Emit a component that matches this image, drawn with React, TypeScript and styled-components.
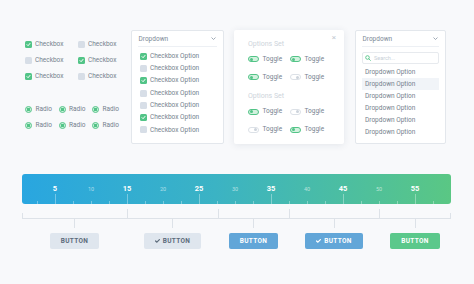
import React from 'react';
import styled, { createGlobalStyle } from 'styled-components';

const green = '#52c487';
const ink = '#75818e';
const rule = '#dde2e8';

const Global = createGlobalStyle`
  body {
    margin: 0;
    background: #f8f9fb;
    font-family: Roboto, 'Liberation Sans', sans-serif;
  }
`;

const S = {
    Page: styled.div`
    width: 474px;
    height: 284px;
    padding-top: 30px;
    box-sizing: border-box;
    overflow: hidden;
    `,
    Top: styled.div`
    display: flex;
    align-items: flex-start;
    padding-left: 25px;
    `,
    Side: styled.div`
    width: 106px;
    flex-shrink: 0;
    padding-top: 6px;
    box-sizing: border-box;
    `,
    CheckGrid: styled.div`
    display: grid;
    grid-template-columns: 53px 53px;
    grid-auto-rows: 16px;
    align-items: center;
    `,
    RadioGrid: styled.div`
    display: grid;
    grid-template-columns: repeat(3, 33.5px);
    grid-auto-rows: 16px;
    align-items: center;
    margin-top: 17px;
    `,
    Item: styled.div<{ $gap?: number }>`
    display: flex;
    align-items: center;
    gap: ${p => p.$gap ?? 3}px;
    font-size: 6.5px;
    line-height: 1;
    color: ${ink};
    white-space: nowrap;
    `,
    Box: styled.span<{ $on: boolean }>`
    width: 7px;
    height: 7px;
    flex-shrink: 0;
    border-radius: 1.5px;
    background: ${p => p.$on ? green : '#d7dee7'};
    display: flex;
    align-items: center;
    justify-content: center;
    `,
    Radio: styled.span`
    width: 7px;
    height: 7px;
    flex-shrink: 0;
    border-radius: 50%;
    box-sizing: border-box;
    border: 1px solid ${green};
    background: radial-gradient(circle, ${green} 0 1.4px, #c9eed9 1.8px);
    `,
    Panel: styled.div<{ $w: number; $ml: number; $float?: boolean }>`
    width: ${p => p.$w}px;
    height: 114px;
    margin-left: ${p => p.$ml}px;
    flex-shrink: 0;
    box-sizing: border-box;
    background: #fff;
    border-radius: 2px;
    border: ${p => p.$float ? 'none' : '1px solid #e3e7ec'};
    box-shadow: ${p => p.$float ? '0 1px 7px rgba(40, 60, 90, 0.1)' : 'none'};
    padding: ${p => p.$float ? '9px 8px 0 14px' : '0 6px'};
    `,
    Header: styled.div`
    height: 15px;
    display: flex;
    align-items: center;
    justify-content: space-between;
    border-bottom: 1px solid #edf0f4;
    font-size: 6.5px;
    color: #7d8996;
    padding: 0 1px 0 0.5px;
    `,
    OptList: styled.div`
    padding-top: 3px;
    `,
    OptRow: styled.div`
    height: 12.3px;
    padding-left: 2px;
    display: flex;
    align-items: center;
    `,
    TitleRow: styled.div`
    display: flex;
    justify-content: space-between;
    align-items: flex-start;
    `,
    Title: styled.div<{ $mt?: number }>`
    font-size: 7px;
    line-height: 10px;
    color: #cdd4db;
    margin-top: ${p => p.$mt ?? 0}px;
    `,
    Close: styled.span`
    font-size: 8px;
    line-height: 8px;
    color: #c3cad2;
    margin-top: -5px;
    `,
    ToggleGrid: styled.div<{ $mt: number }>`
    display: grid;
    grid-template-columns: 42px 42px;
    grid-auto-rows: 18px;
    align-items: center;
    margin-top: ${p => p.$mt}px;
    `,
    Switch: styled.span<{ $on: boolean }>`
    width: 11px;
    height: 6px;
    flex-shrink: 0;
    box-sizing: border-box;
    border-radius: 3px;
    border: 1px solid ${p => p.$on ? green : '#dce1e7'};
    background: ${p => p.$on ? '#d3f1df' : '#fff'};
    display: flex;
    align-items: center;
    justify-content: ${p => p.$on ? 'flex-start' : 'flex-end'};
    padding: 0 1px;
    `,
    Knob: styled.span<{ $on: boolean }>`
    width: 3px;
    height: 3px;
    border-radius: 50%;
    background: ${p => p.$on ? green : '#cdd4dc'};
    `,
    Search: styled.div`
    margin-top: 5px;
    height: 12px;
    box-sizing: border-box;
    border: 1px solid #e7eaee;
    border-radius: 2px;
    display: flex;
    align-items: center;
    gap: 3px;
    padding-left: 2px;
    font-size: 5.5px;
    color: #c8cfd7;
    `,
    DropList: styled.div`
    margin-top: 2px;
    `,
    DropOpt: styled.div<{ $active?: boolean }>`
    height: 12px;
    padding-left: 3px;
    display: flex;
    align-items: center;
    font-size: 6.5px;
    color: ${ink};
    background: ${p => p.$active ? '#f1f4f8' : 'transparent'};
    `,
    Bar: styled.div`
    margin: 30px 0 0 22px;
    width: 429px;
    height: 30px;
    box-sizing: border-box;
    padding-left: 6px;
    border-radius: 3px;
    background: linear-gradient(90deg, #29a6e0 0%, #3bb3c4 45%, #5ac784 100%);
    display: flex;
    `,
    Cell: styled.div`
    width: 18px;
    flex-shrink: 0;
    display: flex;
    flex-direction: column;
    align-items: center;
    `,
    Num: styled.span<{ $major: boolean }>`
    margin-top: 10px;
    height: 10px;
    line-height: 10px;
    font-size: ${p => p.$major ? 7.5 : 5.5}px;
    font-weight: ${p => p.$major ? 700 : 400};
    color: ${p => p.$major ? '#fff' : 'rgba(255, 255, 255, 0.6)'};
    `,
    Tick: styled.span<{ $tall: boolean }>`
    margin-top: auto;
    width: 1px;
    height: ${p => p.$tall ? 10 : 3}px;
    background: rgba(255, 255, 255, 0.35);
    `,
    Ruler: styled.div`
    margin: 5px 0 0 22px;
    width: 429px;
    display: flex;
    `,
    Seg: styled.div<{ $w: number }>`
    width: ${p => p.$w}px;
    display: flex;
    flex-direction: column;
    align-items: center;
    `,
    Brace: styled.div<{ $first: boolean; $last: boolean }>`
    align-self: stretch;
    height: 9px;
    border-bottom: 1px solid ${rule};
    border-left: ${p => p.$first ? 'none' : `1px solid ${rule}`};
    background:
      ${p => p.$first ? `linear-gradient(${rule}, ${rule}) left bottom / 1px 5px no-repeat,` : ''}
      ${p => p.$last ? `linear-gradient(${rule}, ${rule}) right bottom / 1px 5px no-repeat,` : ''}
      transparent;
    `,
    Stem: styled.span`
    width: 1px;
    height: 9px;
    background: ${rule};
    `,
    Btn: styled.button<{ $kind: 'grey' | 'blue' | 'green' }>`
    margin-top: 5px;
    height: 16px;
    padding: 0 11px;
    border: none;
    border-radius: 2px;
    display: flex;
    align-items: center;
    gap: 3px;
    font-family: inherit;
    font-size: 6.5px;
    font-weight: 700;
    letter-spacing: 0.3px;
    background: ${p => p.$kind === 'grey' ? '#dfe6ee' : p.$kind === 'blue' ? '#62a6d8' : '#5bc88b'};
    color: ${p => p.$kind === 'grey' ? '#5c6b7b' : '#fff'};
    `
};

const Tick = () => (
    <svg width="5" height="5" viewBox="0 0 5 5">
        <polyline points="1,2.6 2.1,3.7 4,1.4" fill="none" stroke="#fff" strokeWidth="1" strokeLinecap="round" strokeLinejoin="round" />
    </svg>
);

const Chevron = () => (
    <svg width="5" height="3" viewBox="0 0 5 3">
        <polyline points="0.5,0.5 2.5,2.5 4.5,0.5" fill="none" stroke="#8996a3" strokeWidth="0.8" />
    </svg>
);

const BtnCheck = ({ color }: { color: string }) => (
    <svg width="5" height="4" viewBox="0 0 5 4">
        <polyline points="0.6,2 1.9,3.2 4.4,0.7" fill="none" stroke={color} strokeWidth="1.2" strokeLinecap="round" strokeLinejoin="round" />
    </svg>
);

const checks = [true, false, false, true, true, false];
const options = [true, false, true, false, false, true, false];
const toggles1 = [true, true, true, false];
const toggles2 = [true, false, false, true];
const segs = [
    { w: 105, kind: 'grey' as const, check: false },
    { w: 91, kind: 'grey' as const, check: true },
    { w: 71, kind: 'blue' as const, check: false },
    { w: 90, kind: 'blue' as const, check: true },
    { w: 72, kind: 'green' as const, check: false }
];

const Toggles = ({ list, mt }: { list: boolean[]; mt: number }) => (
    <S.ToggleGrid $mt={mt}>
        {list.map((on, i) => (
            <S.Item key={i} $gap={3.5}>
                <S.Switch $on={on}><S.Knob $on={on} /></S.Switch>
                Toggle
            </S.Item>
        ))}
    </S.ToggleGrid>
);

export default function App() {
    return <>
        <Global />
        <S.Page>
            <S.Top>
                <S.Side>
                    <S.CheckGrid>
                        {checks.map((on, i) => (
                            <S.Item key={i}>
                                <S.Box $on={on}>{on && <Tick />}</S.Box>
                                Checkbox
                            </S.Item>
                        ))}
                    </S.CheckGrid>
                    <S.RadioGrid>
                        {Array.from({ length: 6 }).map((_, i) => (
                            <S.Item key={i} $gap={3.5}>
                                <S.Radio />
                                Radio
                            </S.Item>
                        ))}
                    </S.RadioGrid>
                </S.Side>

                <S.Panel $w={93} $ml={0}>
                    <S.Header>Dropdown <Chevron /></S.Header>
                    <S.OptList>
                        {options.map((on, i) => (
                            <S.OptRow key={i}>
                                <S.Item>
                                    <S.Box $on={on}>{on && <Tick />}</S.Box>
                                    Checkbox Option
                                </S.Item>
                            </S.OptRow>
                        ))}
                    </S.OptList>
                </S.Panel>

                <S.Panel $w={110} $ml={10} $float>
                    <S.TitleRow>
                        <S.Title>Options Set</S.Title>
                        <S.Close>×</S.Close>
                    </S.TitleRow>
                    <Toggles list={toggles1} mt={1} />
                    <S.Title $mt={4.5}>Options Set</S.Title>
                    <Toggles list={toggles2} mt={2} />
                </S.Panel>

                <S.Panel $w={91} $ml={11}>
                    <S.Header>Dropdown <Chevron /></S.Header>
                    <S.Search>
                        <svg width="6" height="6" viewBox="0 0 6 6">
                            <circle cx="2.5" cy="2.5" r="1.8" fill="none" stroke={green} strokeWidth="0.9" />
                            <line x1="3.9" y1="3.9" x2="5.4" y2="5.4" stroke={green} strokeWidth="0.9" strokeLinecap="round" />
                        </svg>
                        Search...
                    </S.Search>
                    <S.DropList>
                        {Array.from({ length: 6 }).map((_, i) => (
                            <S.DropOpt key={i} $active={i === 1}>Dropdown Option</S.DropOpt>
                        ))}
                    </S.DropList>
                </S.Panel>
            </S.Top>

            <S.Bar>
                {Array.from({ length: 23 }).map((_, i) => {
                    const labelled = i % 2 === 1;
                    const value = (i + 1) * 2.5;
                    const major = labelled && ((i + 1) / 2) % 2 === 1;
                    return (
                        <S.Cell key={i}>
                            {labelled && <S.Num $major={major}>{value}</S.Num>}
                            <S.Tick $tall={major} />
                        </S.Cell>
                    );
                })}
            </S.Bar>

            <S.Ruler>
                {segs.map((s, i) => (
                    <S.Seg key={i} $w={s.w}>
                        <S.Brace $first={i === 0} $last={i === segs.length - 1} />
                        <S.Stem />
                        <S.Btn $kind={s.kind}>
                            {s.check && <BtnCheck color={s.kind === 'grey' ? '#5c6b7b' : '#fff'} />}
                            BUTTON
                        </S.Btn>
                    </S.Seg>
                ))}
            </S.Ruler>
        </S.Page>
    </>;
}
